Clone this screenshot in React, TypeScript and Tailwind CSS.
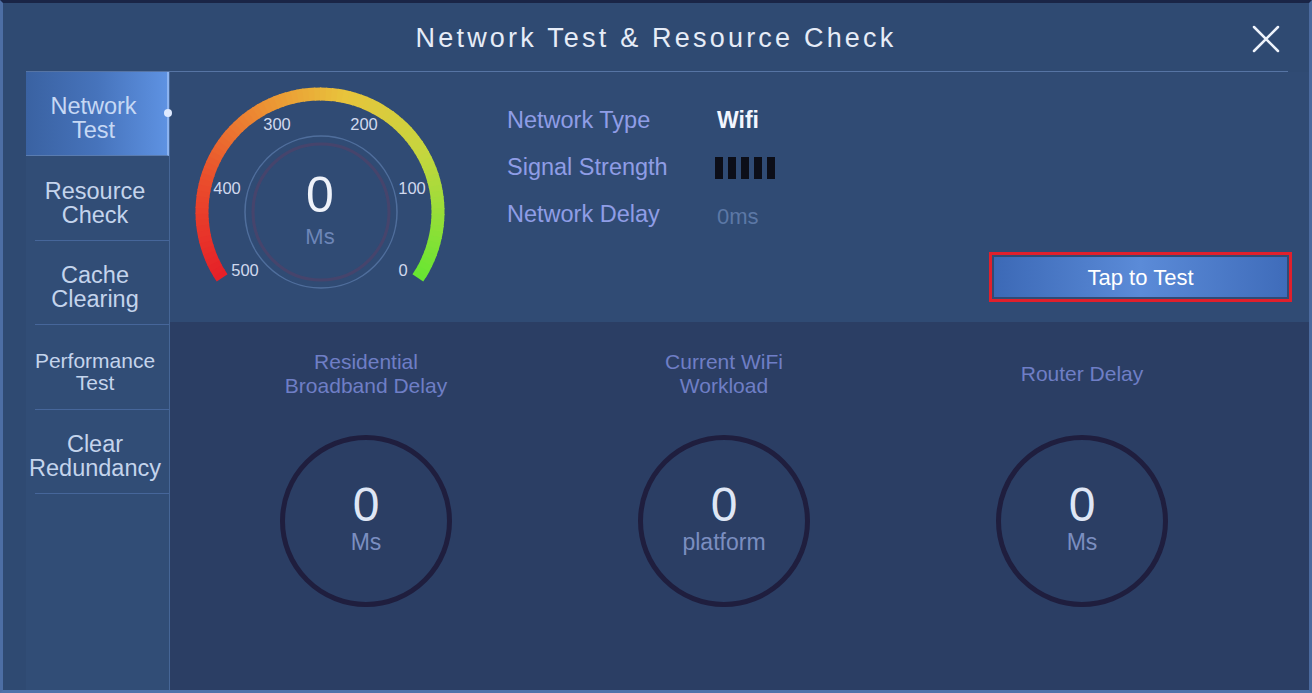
import React from "react";

const FONT = { fontFamily: '"Liberation Sans", Arial, sans-serif' };

const tabs = [
  { label: ["Network", "Test"], active: true },
  { label: ["Resource", "Check"] },
  { label: ["Cache", "Clearing"] },
  { label: ["Performance", "Test"], small: true },
  { label: ["Clear", "Redundancy"] },
];

const stats = [
  { title: ["Residential", "Broadband Delay"], unit: "Ms" },
  { title: ["Current WiFi", "Workload"], unit: "platform" },
  { title: ["Router Delay"], unit: "Ms" },
];

const stops: [number, [number, number, number]][] = [
  [0, [230, 32, 40]],
  [0.2, [234, 78, 44]],
  [0.4, [236, 150, 52]],
  [0.55, [232, 196, 60]],
  [0.75, [196, 214, 62]],
  [1, [104, 230, 50]],
];

function colorAt(t: number) {
  for (let i = 1; i < stops.length; i++) {
    const [t1, c1] = stops[i];
    const [t0, c0] = stops[i - 1];
    if (t <= t1) {
      const k = (t - t0) / (t1 - t0);
      const c = c0.map((v, j) => Math.round(v + (c1[j] - v) * k));
      return `rgb(${c[0]},${c[1]},${c[2]})`;
    }
  }
  return "rgb(104,230,50)";
}

const Gauge = () => {
  const cx = 132;
  const cy = 134;
  const r = 118;
  const n = 90;
  const start = 214;
  const sweep = 248;
  const pt = (deg: number) => {
    const a = (deg * Math.PI) / 180;
    return [cx + r * Math.cos(a), cy - r * Math.sin(a)];
  };
  const segs = Array.from({ length: n }, (_, i) => {
    const a0 = start - (sweep * i) / n;
    const a1 = start - (sweep * (i + 1)) / n - (i < n - 1 ? 0.6 : 0);
    const [x0, y0] = pt(a0);
    const [x1, y1] = pt(a1);
    return (
      <path
        key={i}
        d={`M${x0} ${y0} A${r} ${r} 0 0 1 ${x1} ${y1}`}
        stroke={colorAt(i / (n - 1))}
        strokeWidth={13}
        fill="none"
      />
    );
  });
  const labels: [string, number, number][] = [
    ["300", 89, 46],
    ["200", 176, 46],
    ["400", 39, 110],
    ["100", 224, 110],
    ["500", 57, 192],
    ["0", 215, 192],
  ];
  return (
    <svg width={264} height={214} className="shrink-0 mt-[6px] ml-[18px]" style={FONT}>
      {segs}
      <circle cx={133} cy={134} r={76} stroke="#5877a6" strokeWidth={1.5} fill="none" opacity={0.8} />
      <circle cx={133} cy={134} r={68} stroke="#5a3f66" strokeWidth={3} fill="none" opacity={0.55} />
      {labels.map(([t, x, y]) => (
        <text key={t} x={x} y={y} fill="#d0d9ee" fontSize={16.5} textAnchor="middle" dominantBaseline="central">
          {t}
        </text>
      ))}
      <text x={132} y={117} fill="#eef2fa" fontSize={50} textAnchor="middle" dominantBaseline="central">
        0
      </text>
      <text x={132} y={158} fill="#6d86b8" fontSize={22} textAnchor="middle" dominantBaseline="central">
        Ms
      </text>
    </svg>
  );
};

const InfoRow = ({ label, children }: { label: string; children: React.ReactNode }) => (
  <div className="flex items-center h-[47px]">
    <span className="w-[210px] text-[23.5px] text-[#8f9de6]">{label}</span>
    {children}
  </div>
);

const SignalBars = () => (
  <div className="flex gap-[5px] -ml-[2px]">
    {[0, 1, 2, 3, 4].map((i) => (
      <div key={i} className="w-[8px] h-[22px] bg-[#0c0e18]" />
    ))}
  </div>
);

const StatCircle = ({ title, unit }: { title: string[]; unit: string }) => (
  <div className="flex flex-col items-center">
    <div className="h-[48px] flex flex-col items-center justify-center text-[21px] leading-[24px] text-[#6f7ec6]">
      {title.map((t) => (
        <span key={t}>{t}</span>
      ))}
    </div>
    <div className="mt-[37px] w-[172px] h-[172px] rounded-full border-[5px] border-[#1f1e3e] flex flex-col items-center justify-center pt-[8px]">
      <span className="text-[48px] leading-[48px] text-[#dfe6f5] -mt-[14px]">0</span>
      <span className="text-[23px] leading-[26px] text-[#7b8ec0]">{unit}</span>
    </div>
  </div>
);

export default function App() {
  return (
    <div
      className="w-[1312px] h-[693px] overflow-hidden bg-[#2f4a72] flex flex-col border-t-[3px] border-t-[#1a2546] border-l-[3px] border-l-[#4d6ea4] border-r-[3px] border-r-[#4b6a9e] border-b-[3px] border-b-[#4e73aa]"
      style={FONT}
    >
      <div className="h-[68px] shrink-0 relative flex items-center justify-center pt-[3px]">
        <h1 className="text-[27px] tracking-[3.2px] text-[#e6ecf7]">Network Test &amp; Resource Check</h1>
        <svg className="absolute right-[28px] top-[21px]" width={30} height={30} viewBox="0 0 30 30">
          <path d="M3 3 L27 27 M27 3 L3 27" stroke="#eef3fb" strokeWidth={2.5} strokeLinecap="round" />
        </svg>
      </div>
      <div className="h-px shrink-0 ml-[23px] mr-[21px] bg-[#5674a4]" />
      <div className="flex flex-1 min-h-0">
        <div className="w-[144px] ml-[23px] shrink-0 flex flex-col border-r border-r-[#466696] bg-[#314d76]">
          {tabs.map((t) => (
            <div
              key={t.label.join(" ")}
              className={
                t.active
                  ? "relative h-[84px] flex flex-col items-center justify-center pt-[8px] pr-[6px] text-[23.5px] leading-[24px] text-[#c6d8f4] bg-gradient-to-r from-[#3a62a2] via-[#4673bb] to-[#5e92e2] border-r-2 border-r-[#8cb3f0] border-b border-b-[#5a7cb0]"
                  : t.small
                    ? "h-[84.5px] flex flex-col items-center justify-center pt-[10px] text-[21px] leading-[22px] text-[#c4d4ec] border-b border-b-[#46669a] ml-[9px] pr-[14px]"
                    : "h-[84.5px] flex flex-col items-center justify-center pt-[10px] text-[23.5px] leading-[24px] text-[#c4d4ec] border-b border-b-[#46669a] ml-[9px] pr-[14px]"
              }
            >
              {t.label.map((l) => (
                <span key={l}>{l}</span>
              ))}
              {t.active && (
                <div className="absolute -right-[5px] top-[37px] w-[8px] h-[8px] rounded-full bg-[#dfeaff]" />
              )}
            </div>
          ))}
        </div>
        <div className="flex-1 flex flex-col min-w-0">
          <div className="h-[250px] shrink-0 flex bg-[#304b74]">
            <Gauge />
            <div className="ml-[55px] mt-[25px] flex flex-col">
              <InfoRow label="Network Type">
                <span className="text-[23px] font-bold text-[#f2f6ff]">Wifi</span>
              </InfoRow>
              <InfoRow label="Signal Strength">
                <SignalBars />
              </InfoRow>
              <InfoRow label="Network Delay">
                <span className="text-[22px] text-[#5c78a6] mt-[3px]">0ms</span>
              </InfoRow>
            </div>
            <div className="flex-1" />
            <div className="self-end mb-[20px] mr-[17px] border-[3px] border-[#e0202c] p-[2px]">
              <div className="w-[293px] h-[40px] flex items-center justify-center text-[22px] text-white bg-gradient-to-r from-[#3c69b6] via-[#5b8bd8] to-[#3f6cba]">
                Tap to Test
              </div>
            </div>
          </div>
          <div className="flex-1 bg-[#2b3e64]">
            <div className="grid grid-cols-3 w-[1074px] ml-[17px] pt-[28px]">
              {stats.map((s) => (
                <StatCircle key={s.title.join(" ")} title={s.title} unit={s.unit} />
              ))}
            </div>
          </div>
        </div>
      </div>
    </div>
  );
}
